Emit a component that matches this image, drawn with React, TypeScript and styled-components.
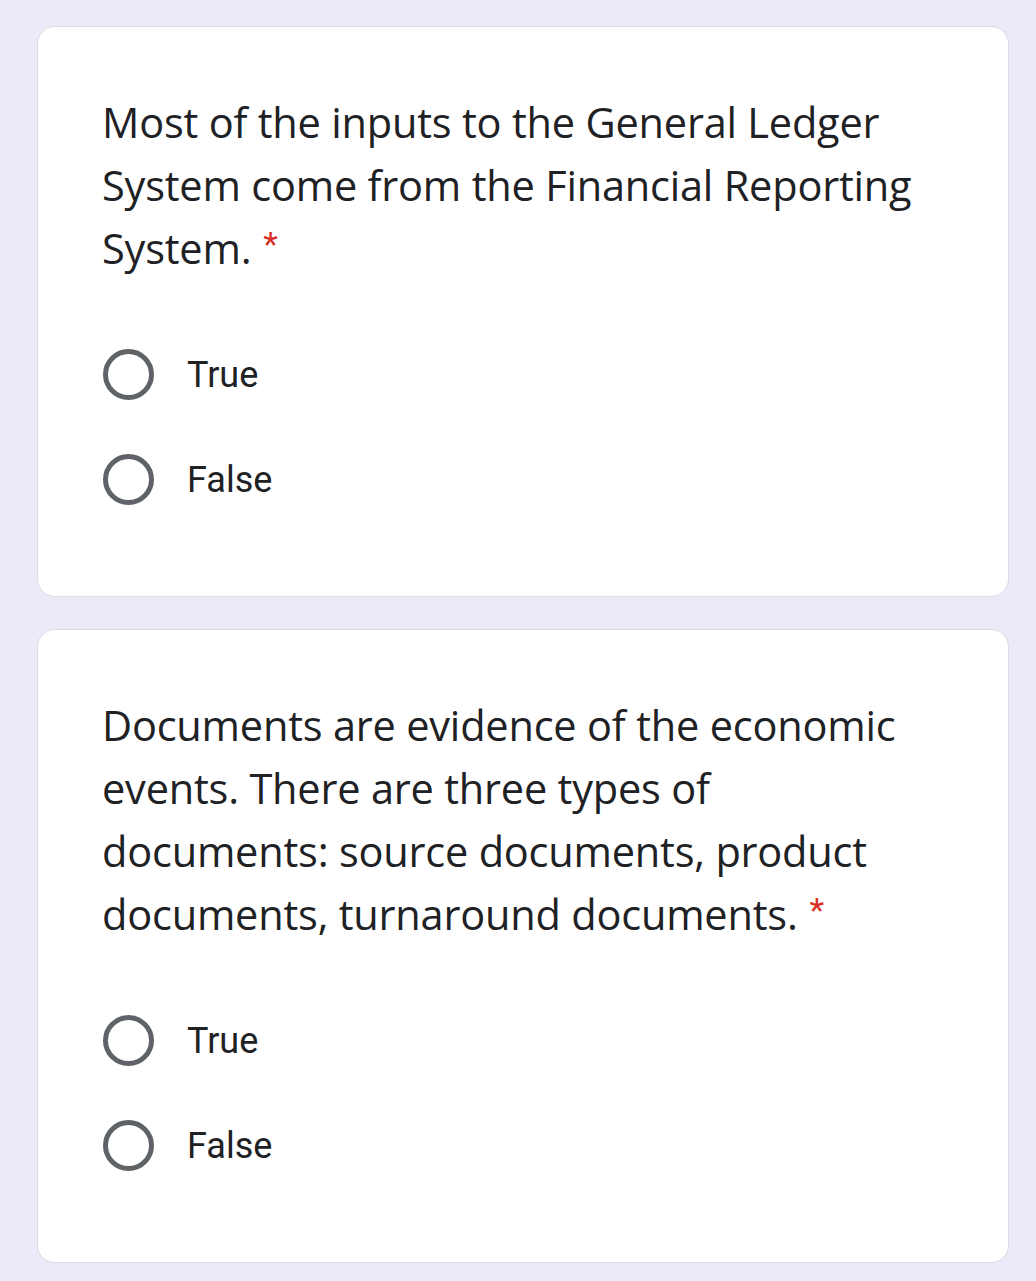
import React from 'react';
import styled, { createGlobalStyle } from 'styled-components';

const GlobalStyle = createGlobalStyle`
  body {
    margin: 0;
    background: #ede9f8;
  }
`;

interface IQuestion {
  text: string;
  options: string[];
}

const questions: IQuestion[] = [
  {
    text: 'Most of the inputs to the General Ledger System come from the Financial Reporting System.',
    options: ['True', 'False'],
  },
  {
    text: 'Documents are evidence of the economic events. There are three types of documents: source documents, product documents, turnaround documents.',
    options: ['True', 'False'],
  },
];

const App: React.FunctionComponent = () => {
  return (
    <Page>
      <GlobalStyle />
      {questions.map((q, i) => (
        <Card key={i}>
          <Title>
            {q.text}
            <Required>*</Required>
          </Title>
          <Options>
            {q.options.map((opt) => (
              <OptionRow key={opt}>
                <Radio />
                <OptionLabel>{opt}</OptionLabel>
              </OptionRow>
            ))}
          </Options>
        </Card>
      ))}
    </Page>
  );
};

const Page = styled.div`
  display: flex;
  flex-direction: column;
  gap: 32px;
  padding: 26px 27px 18px 37px;
  min-height: 1281px;
  box-sizing: border-box;
  background: #ede9f8;
`;

const Card = styled.div`
  width: 972px;
  box-sizing: border-box;
  background: #ffffff;
  border: 1px solid #dadce0;
  border-radius: 18px;
  padding: 64px 60px 64px 64px;
`;

const Title = styled.div`
  font-family: 'Open Sans', Roboto, sans-serif;
  font-size: 41.5px;
  line-height: 63px;
  letter-spacing: -0.2px;
  color: #202124;
  max-width: 822px;
`;

const Required = styled.span`
  display: inline-block;
  color: #d93025;
  font-family: Roboto, sans-serif;
  font-size: 34px;
  line-height: 34px;
  margin-left: 12px;
  vertical-align: 8px;
`;

const Options = styled.div`
  display: flex;
  flex-direction: column;
  margin-top: 42px;
`;

const OptionRow = styled.div`
  display: flex;
  align-items: center;
  height: 105px;
`;

const Radio = styled.span`
  width: 51px;
  height: 51px;
  box-sizing: border-box;
  border: 5px solid #5f6368;
  border-radius: 50%;
  margin-left: 1px;
`;

const OptionLabel = styled.span`
  font-family: Roboto, sans-serif;
  font-size: 36px;
  color: #202124;
  margin-left: 33px;
`;

export default App;
